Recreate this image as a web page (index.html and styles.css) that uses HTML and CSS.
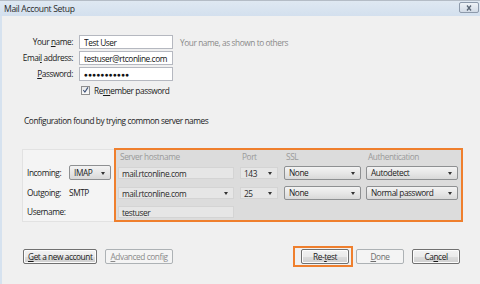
FILE: index.html
```html
<!DOCTYPE html>
<html>
<head>
<meta charset="utf-8">
<link rel="stylesheet" href="styles.css">
</head>
<body>
<div class="window">
  <div class="titlebar">
    <span class="title">Mail Account Setup</span>
    <span class="close"><svg width="10" height="6" viewBox="0 0 10 6"><path d="M3 0.5 L7 5.5 M7 0.5 L3 5.5" stroke="#5a6675" stroke-width="1.3"/></svg></span>
  </div>
  <div class="body">
    <div class="form">
      <label class="lbl">Your <u>n</u>ame:</label>
      <div class="field-row"><input class="txt" value="Test User"><span class="hint">Your name, as shown to others</span></div>
      <label class="lbl">Emai<u>l</u> address:</label>
      <div class="field-row"><input class="txt" value="testuser@rtconline.com"></div>
      <label class="lbl"><u>P</u>assword:</label>
      <div class="field-row"><input class="txt pw" value="●●●●●●●●●●●"></div>
      <span></span>
      <div class="check-row"><span class="checkbox"><svg width="8" height="8" viewBox="0 0 8 8"><path d="M1.5 4 L3.3 6.3 L6.8 1" stroke="#3a4f75" stroke-width="1.2" fill="none"/></svg></span><span>Re<u>m</u>ember password</span></div>
    </div>
    <div class="status">Configuration found by trying common server names</div>
    <div class="panel">
      <div class="left">
        <div class="lrow lrow1"><span class="llbl">Incoming:</span><span class="sel imap">IMAP<i class="arr"></i></span></div>
        <div class="lrow"><span class="llbl">Outgoing:</span><span class="smtp">SMTP</span></div>
        <div class="lrow"><span class="llbl">Username:</span></div>
      </div>
      <div class="orange">
        <div class="grid">
          <span class="hdr">Server hostname</span>
          <span class="hdr">Port</span>
          <span class="hdr">SSL</span>
          <span class="hdr">Authentication</span>

          <span class="dis">mail.rtconline.com</span>
          <span class="dis combo">143<i class="arr"></i></span>
          <span class="sel">None<i class="arr"></i></span>
          <span class="sel">Autodetect<i class="arr"></i></span>

          <span class="dis combo">mail.rtconline.com<i class="arr"></i></span>
          <span class="dis combo">25<i class="arr"></i></span>
          <span class="sel">None<i class="arr"></i></span>
          <span class="sel">Normal password<i class="arr"></i></span>

          <span class="dis">testuser</span>
        </div>
      </div>
    </div>
    <div class="buttons">
      <span class="btn"><u>G</u>et a new account</span>
      <span class="btn disabled"><u>A</u>dvanced config</span>
      <span class="spacer"></span>
      <span class="hl"><span class="btn retest">Re-<u>t</u>est</span></span>
      <span class="btn disabled done"><u>D</u>one</span>
      <span class="btn cancel">Ca<u>n</u>cel</span>
    </div>
  </div>
</div>
</body>
</html>
```

FILE: styles.css
```css
* { box-sizing: border-box; }
html, body { margin: 0; padding: 0; }
body {
  width: 480px;
  height: 284px;
  overflow: hidden;
  background: #f0f0f0;
  font-family: "Open Sans", "Noto Sans", sans-serif;
  font-size: 8.3px;
  letter-spacing: -0.42px;
  color: #1a1a1a;
}
u { text-decoration: underline; text-underline-offset: 1px; }
.window {
  width: 480px;
  height: 284px;
  border-left: 2px solid #d6e2ef;
  background: #f0f0f0;
}
.titlebar {
  height: 16px;
  border-top: 1px solid #b4bcc6;
  background: linear-gradient(#dfe8f2, #d3e0ee);
  display: flex;
  align-items: center;
  justify-content: space-between;
  padding: 0 1px 0 4px;
  margin-left: -2px;
}
.title { font-size: 8.6px; letter-spacing: -0.35px; color: #2a2a2a; }
.close {
  width: 20px;
  height: 11px;
  border: 1px solid #8d9aab;
  border-radius: 2px;
  background: linear-gradient(#eef2f7, #d2dbe6);
  display: flex;
  align-items: center;
  justify-content: center;
  margin-top: -2px;
}
.body { padding: 19px 0 0 0; }
.form {
  display: grid;
  grid-template-columns: 71px auto;
  column-gap: 6px;
  row-gap: 2px;
  align-items: center;
}
.lbl { text-align: right; line-height: 14px; }
.field-row { display: flex; align-items: center; height: 14px; }
.txt {
  width: 94px;
  height: 14px;
  border: 1px solid #b5b8c0;
  background: #fff;
  font: inherit;
  letter-spacing: -0.42px;
  padding: 0 4px;
  color: #111;
  margin: 0;
}
.txt.pw { font-size: 6.5px; letter-spacing: 0.2px; }
.hint { color: #8a8a8a; margin-left: 7px; }
.check-row { display: flex; align-items: center; gap: 4px; height: 12px; margin-top: 1px; padding-left: 2px; }
.checkbox {
  width: 9px; height: 9px;
  border: 1px solid #8f8f8f;
  background: linear-gradient(#e9e9e9, #fafafa);
  display: flex; align-items: center; justify-content: center;
}
.status { margin: 19px 0 0 22px; height: 12px; line-height: 12px; }
.panel {
  margin: 22px 0 0 20px;
  width: 441px;
  height: 73px;
  display: flex;
  background: #f4f4f4;
  border: 1px solid #e2e2e2;
  border-right: none;
}
.left { width: 91px; padding: 14px 0 0 4px; }
.lrow { height: 19px; display: flex; align-items: center; }
.lrow1 { height: 17px; margin-bottom: 2px; }
.llbl { width: 42px; }
.orange {
  flex: 1;
  margin: -2px 0 -1px 0;
  border: 2px solid #ef7f2d;
  background: #dcdcdc;
  padding: 3px 0 0 2px;
}
.grid {
  display: grid;
  grid-template-columns: 116px 38px 77px 91px;
  column-gap: 6px;
  row-gap: 6px;
  align-items: center;
}
.grid > :nth-child(4n+4) { margin-left: -1px; }
.hdr { color: #9a9a9a; height: 8px; line-height: 8px; margin-bottom: -1px; padding-left: 2px; }
.dis {
  height: 12px;
  line-height: 11px;
  background: #e6e6e6;
  border: 1px solid #d4d4d4;
  padding: 0 3px;
  position: relative;
  color: #2a2a2a;
}
.sel {
  height: 14px;
  line-height: 12px;
  border: 1px solid #8e9092;
  border-radius: 2px;
  background: linear-gradient(#f3f3f3, #e7e7e7 50%, #d8d8d8);
  padding: 0 4px;
  position: relative;
  color: #222;
}
.imap { width: 42px; height: 15px; line-height: 13px; }
.arr {
  position: absolute;
  right: 5px;
  top: 50%;
  margin-top: -1px;
  width: 0; height: 0;
  border-left: 2.5px solid transparent;
  border-right: 2.5px solid transparent;
  border-top: 3px solid #333;
}
.buttons {
  display: flex;
  align-items: center;
  margin: 24px 0 0 21px;
  width: 437px;
  height: 21px;
}
.btn {
  height: 15px;
  line-height: 13px;
  border: 1px solid #707070;
  border-radius: 2px;
  background: linear-gradient(#f2f2f2, #ebebeb 50%, #dddddd 51%, #cfcfcf);
  padding: 0 4px;
  text-align: center;
  color: #1a1a1a;
  box-shadow: inset 0 0 0 1px #fcfcfc;
}
.btn.disabled {
  border-color: #adb2b5;
  background: #f4f4f4;
  color: #8a8a8a;
  box-shadow: none;
}
.btn.done { color: #6e6e6e; }
.buttons > .btn:nth-child(2) { margin-left: 8px; }
.spacer { flex: 1; }
.hl {
  border: 2px solid #ef7f2d;
  height: 21px;
  width: 60px;
  display: flex;
  align-items: center;
  justify-content: flex-end;
  padding-right: 2px;
}
.retest { width: 48px; }
.done { width: 48px; margin-left: 3px; }
.cancel { width: 48px; margin-left: 8px; }
```
